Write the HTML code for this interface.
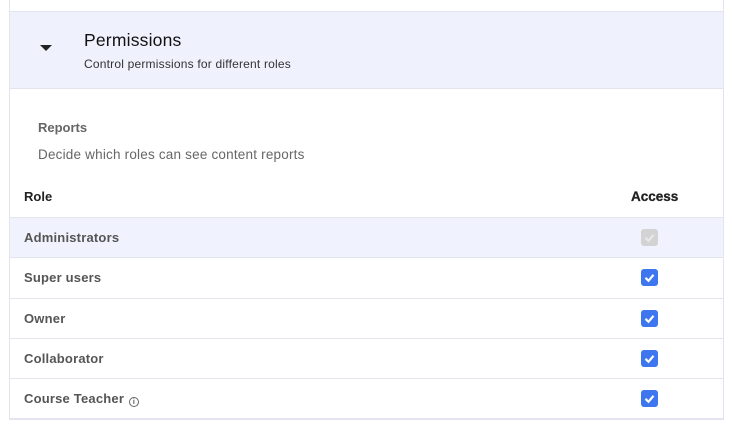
<!DOCTYPE html>
<html><head><meta charset="utf-8"><style>
*{box-sizing:border-box;margin:0;padding:0}
body{width:732px;height:429px;background:#fff;font-family:"Liberation Sans",sans-serif;overflow:hidden;position:relative}
.box{position:absolute;left:9px;top:0;width:715px;height:420px;border-left:1px solid #e3e4ee;border-right:1px solid #e3e4ee;border-bottom:2px solid #e3e4ee}
.hdr{position:absolute;left:0;top:11px;width:100%;height:78px;background:#eff2fd;border-top:1px solid #e2e4f0;border-bottom:1px solid #e2e4f0}
.tri{position:absolute;left:30px;top:33px;width:0;height:0;border-left:6px solid transparent;border-right:6px solid transparent;border-top:6px solid #222}
.t1{position:absolute;left:74px;top:18px;font-size:17.5px;color:#111;letter-spacing:0.2px}
.t2{position:absolute;left:74px;top:45px;font-size:12px;color:#333;letter-spacing:0.2px}
.r1{position:absolute;left:28px;top:120px;font-size:13px;font-weight:bold;color:#666}
.r2{position:absolute;left:28px;top:147px;font-size:13.5px;color:#666;letter-spacing:0.2px}
.th{position:absolute;top:189px;font-size:13px;font-weight:bold;color:#222}
.row{position:absolute;left:0;width:100%;height:41px;border-top:1px solid #e2e4ee}
.row span{position:absolute;left:14px;top:12px;font-size:13px;font-weight:bold;color:#555;letter-spacing:0.2px}
.cb{position:absolute;left:631px;top:11px;width:17px;height:17px;border-radius:3px;background:#3e76ef}
.cb svg{position:absolute;left:0;top:0}
.info{display:inline-block;width:10px;height:10px;border:1px solid #666;border-radius:50%;font-size:7px;text-align:center;line-height:9px;vertical-align:-1px;margin-left:1px;font-weight:bold}
</style></head><body>
<div class="box">
<div class="hdr"><div class="tri"></div><div class="t1">Permissions</div><div class="t2">Control permissions for different roles</div></div>
<div class="r1">Reports</div>
<div class="r2">Decide which roles can see content reports</div>
<div class="th" style="left:14px">Role</div>
<div class="th" style="left:621px;font-size:13.5px;font-weight:600;color:#222;-webkit-text-stroke:0.3px #222">Access</div>
<div class="row" style="top:217px;background:#f0f3fe"><span>Administrators</span><div class="cb" style="background:#d3d3d3"><svg width="17" height="17"><path d="M4.5 8.8l3 3 5-6" stroke="#e8e8e8" stroke-width="2.2" fill="none"/></svg></div></div>
<div class="row" style="top:257px"><span>Super users</span><div class="cb"><svg width="17" height="17"><path d="M4.5 8.8l3 3 5-6" stroke="#fff" stroke-width="2.2" fill="none"/></svg></div></div>
<div class="row" style="top:298px"><span>Owner</span><div class="cb"><svg width="17" height="17"><path d="M4.5 8.8l3 3 5-6" stroke="#fff" stroke-width="2.2" fill="none"/></svg></div></div>
<div class="row" style="top:338px"><span>Collaborator</span><div class="cb"><svg width="17" height="17"><path d="M4.5 8.8l3 3 5-6" stroke="#fff" stroke-width="2.2" fill="none"/></svg></div></div>
<div class="row" style="top:378px"><span>Course Teacher <i class="info" style="font-style:normal">i</i></span><div class="cb"><svg width="17" height="17"><path d="M4.5 8.8l3 3 5-6" stroke="#fff" stroke-width="2.2" fill="none"/></svg></div></div>
</div>
</body></html>
